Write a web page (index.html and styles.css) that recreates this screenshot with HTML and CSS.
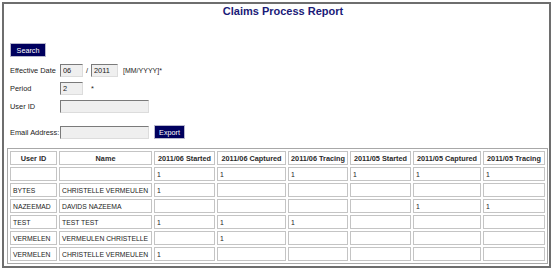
FILE: index.html
```html
<!DOCTYPE html>
<html>
    <head>
        <title>Claims Process Report</title>
        <meta charset="utf-8">
        <link rel="stylesheet" href="styles.css">
    </head>
    <body>
        <div class="frame">
            <h1 class="reportTitle">Claims Process Report</h1>
            <form class="filterForm" name="claimsFilter">
                <input class="navyBtn searchBtn" type="button" value="Search">
                <div class="fieldRow">
                    <span class="fieldLabel">Effective Date</span>
                    <input class="field small" type="text" name="month" value="06">
                    <span class="slash">/</span>
                    <input class="field year" type="text" name="year" value="2011">
                    <span class="hint">[MM/YYYY]*</span>
                </div>
                <div class="fieldRow">
                    <span class="fieldLabel">Period</span>
                    <input class="field small" type="text" name="period" value="2">
                    <span class="star">*</span>
                </div>
                <div class="fieldRow">
                    <span class="fieldLabel">User ID</span>
                    <input class="field wide" type="text" name="userid">
                </div>
                <div class="fieldRow emailRow">
                    <span class="fieldLabel">Email Address:</span>
                    <input class="field wide" type="text" name="email">
                    <input class="navyBtn exportBtn" type="button" value="Export">
                </div>
            </form>
            <table class="report">
                <thead>
                    <tr>
                        <th class="c1">User ID</th>
                        <th class="c2">Name</th>
                        <th class="c3">2011/06 Started</th>
                        <th class="c4">2011/06 Captured</th>
                        <th class="c5">2011/06 Tracing</th>
                        <th class="c6">2011/05 Started</th>
                        <th class="c7">2011/05 Captured</th>
                        <th class="c8">2011/05 Tracing</th>
                    </tr>
                </thead>
                <tbody>
                    <tr><td></td><td></td><td>1</td><td>1</td><td>1</td><td>1</td><td>1</td><td>1</td></tr>
                    <tr><td>BYTES</td><td>CHRISTELLE VERMEULEN</td><td>1</td><td></td><td></td><td></td><td></td><td></td></tr>
                    <tr><td>NAZEEMAD</td><td>DAVIDS NAZEEMA</td><td></td><td></td><td></td><td></td><td>1</td><td>1</td></tr>
                    <tr><td>TEST</td><td>TEST TEST</td><td>1</td><td>1</td><td>1</td><td></td><td></td><td></td></tr>
                    <tr><td>VERMELEN</td><td>VERMEULEN CHRISTELLE</td><td></td><td>1</td><td></td><td></td><td></td><td></td></tr>
                    <tr><td>VERMELEN</td><td>CHRISTELLE VERMEULEN</td><td>1</td><td></td><td></td><td></td><td></td><td></td></tr>
                </tbody>
            </table>
        </div>
    </body>
</html>
```

FILE: styles.css
```css
body {
    margin: 0;
    background: white;
    font-family: "Liberation Sans", Arial, sans-serif;
    color: #222;
}
.frame {
    box-sizing: border-box;
    width: 549px;
    height: 266px;
    margin: 2px;
    border: 2px solid #6e6e6e;
    padding: 0 0 0 3px;
}
.reportTitle {
    margin: 0;
    padding: 1px 0 0 10px;
    height: 12px;
    line-height: 13px;
    font-size: 11px;
    font-weight: bold;
    text-align: center;
    color: #1a1a78;
}
.filterForm {
    margin: 0;
    padding-left: 3px;
}
.navyBtn {
    box-sizing: border-box;
    height: 14px;
    padding: 0;
    border: 1px solid #b8b8cc;
    background: #00005e;
    color: white;
    font-family: "Liberation Sans", Arial, sans-serif;
    font-size: 7.2px;
}
.searchBtn {
    display: block;
    width: 36px;
    margin-top: 26px;
    margin-bottom: 4px;
}
.fieldRow {
    display: flex;
    align-items: center;
    height: 18px;
    font-size: 7.4px;
}
.emailRow {
    margin-top: 8px;
}
.fieldLabel {
    width: 50px;
    white-space: nowrap;
}
.field {
    box-sizing: border-box;
    height: 13px;
    margin: 0;
    padding: 0 2px;
    border: 1px solid;
    border-color: #7a7a7a #dcdcdc #dcdcdc #7a7a7a;
    background: #efefef;
    font-family: "Liberation Sans", Arial, sans-serif;
    font-size: 7.4px;
    color: #222;
}
.small {
    width: 23px;
}
.year {
    width: 27px;
}
.wide {
    width: 89px;
}
.slash {
    width: 8px;
    text-align: center;
}
.hint {
    margin-left: 5px;
    font-size: 7px;
}
.star {
    margin-left: 8px;
}
.exportBtn {
    width: 31px;
    margin-left: 5px;
}
.report {
    box-sizing: border-box;
    width: 541px;
    margin-top: 7px;
    table-layout: fixed;
    border: 1px solid #a8a8a8;
    border-spacing: 2px;
    font-size: 6.8px;
    color: #222;
}
.report th,
.report td {
    box-sizing: border-box;
    height: 14px;
    padding: 0 2px;
    border: 1px solid #c4c4c4;
    white-space: nowrap;
    overflow: hidden;
}
.report th {
    text-align: center;
    font-size: 7.3px;
    font-weight: bold;
    color: #2a2a2a;
}
.report td {
    text-align: left;
}
.c1 { width: 47px; }
.c2 { width: 93px; }
.c3 { width: 61px; }
.c4 { width: 69px; }
.c5 { width: 60px; }
.c6 { width: 61px; }
.c7 { width: 68px; }
.c8 { width: 62px; }
```
